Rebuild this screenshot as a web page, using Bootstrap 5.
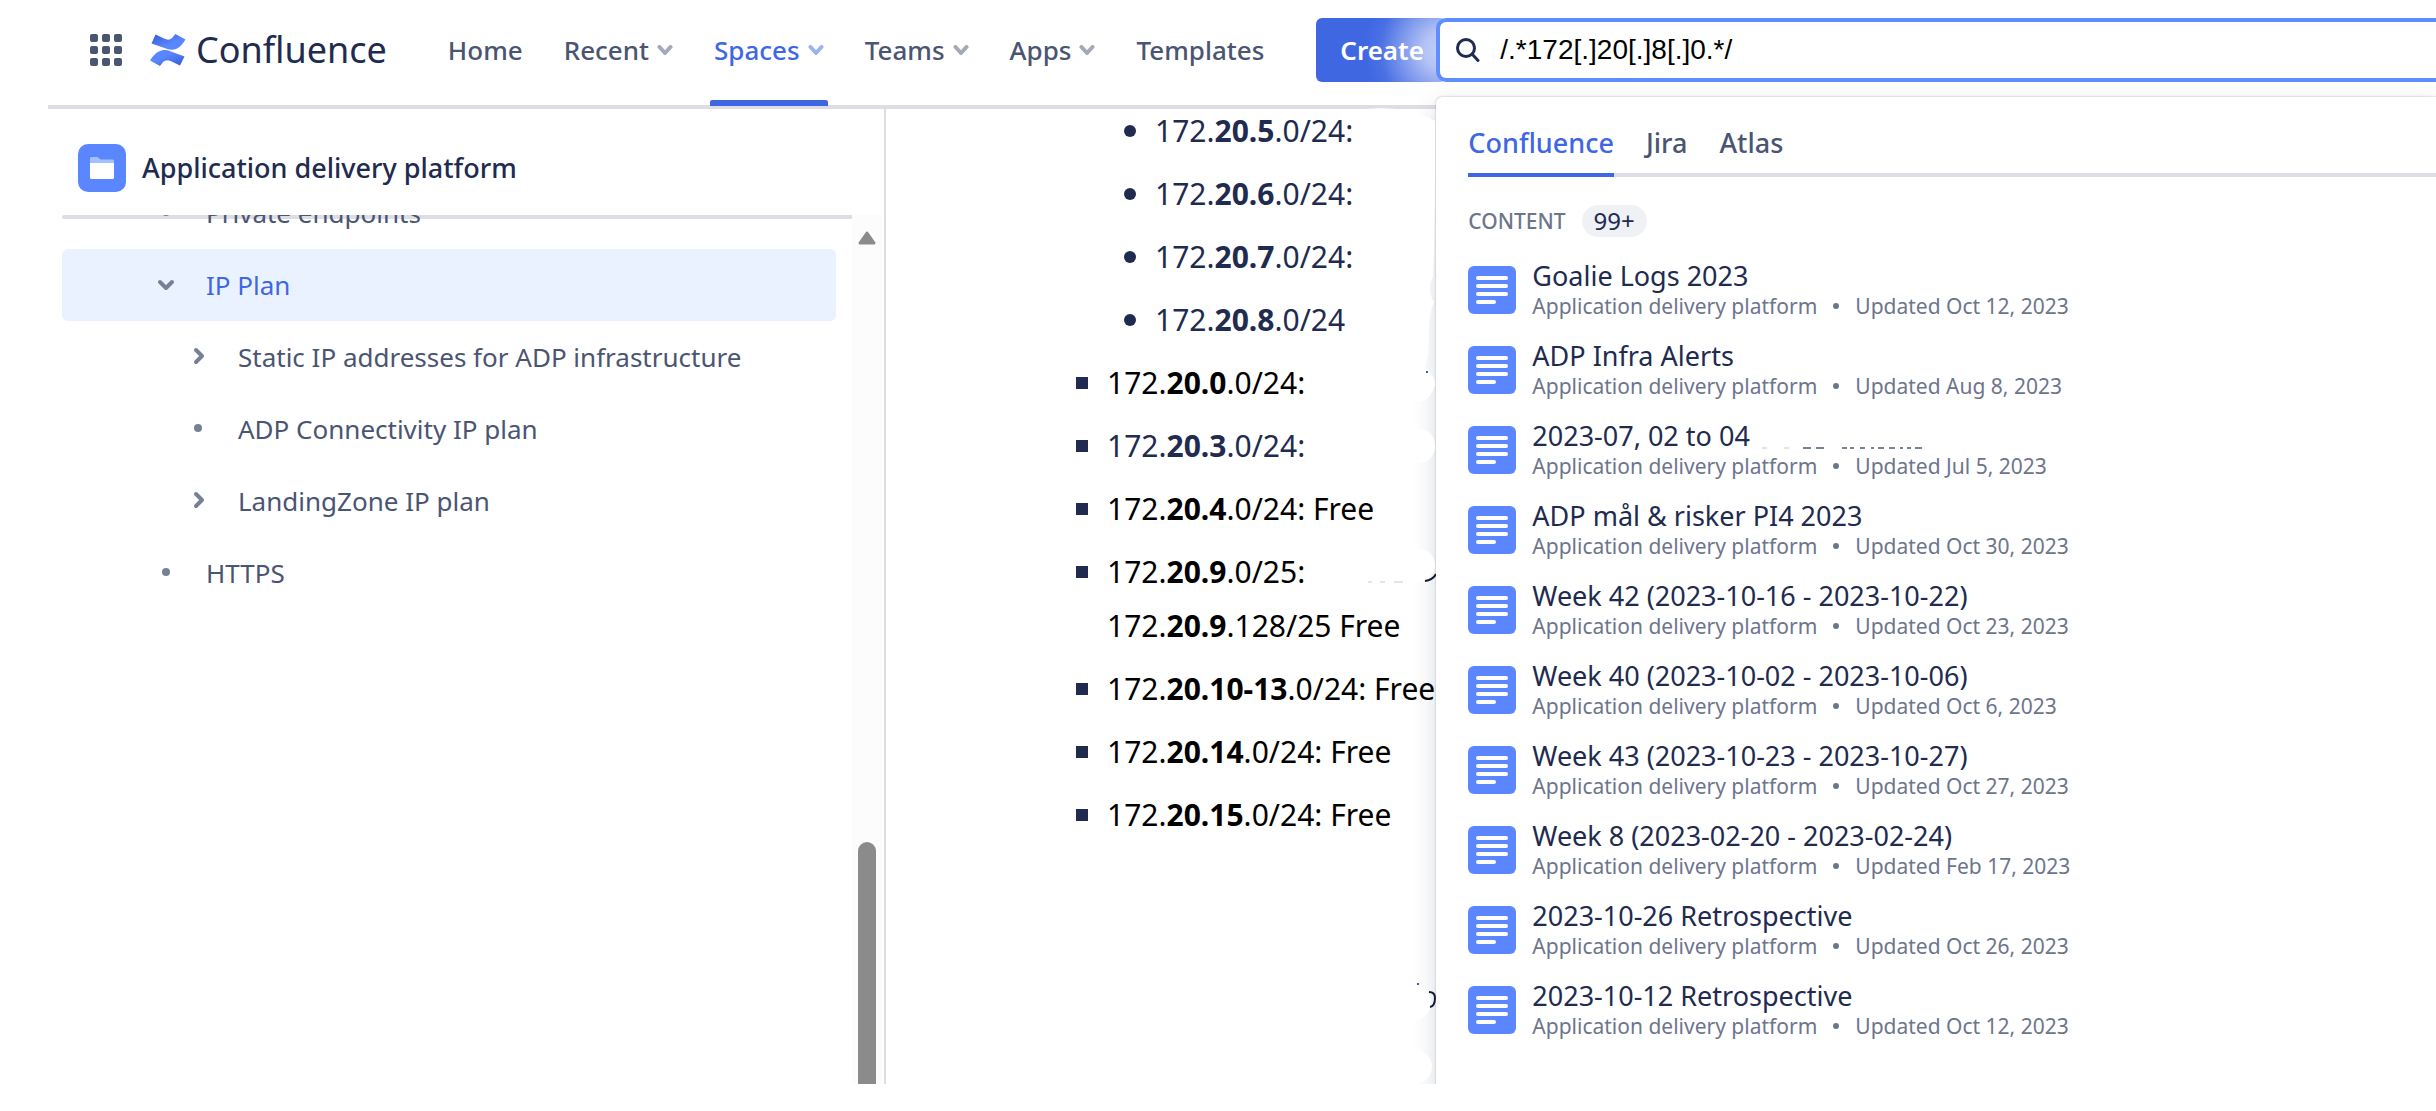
<!DOCTYPE html>
<html lang="en">
<head>
<meta charset="utf-8">
<meta name="viewport" content="width=device-width, initial-scale=1">
<title>Application delivery platform - Confluence</title>
<link href="https://cdn.jsdelivr.net/npm/bootstrap@5.3.0/dist/css/bootstrap.min.css" rel="stylesheet">
<style>
:root{--navy:#212b4f;--slate:#4a5572;--muted-ink:#6d758d;--brand:#3f67e4;--sky:#5a87ff;--rule:#dddee5}
body{font-family:"Noto Sans","Open Sans",sans-serif;font-size:26px;line-height:36px;color:var(--navy);background:#fff}
a{color:inherit;text-decoration:none}
.shell{height:calc(100vh - 27px);margin-left:48px}
.topbar{height:109px;border-bottom:4px solid var(--rule);padding-left:42px}
.topbar-start{height:100px}
.brandlink{gap:10px}
.brandname{font-size:36px;line-height:40px;color:var(--navy)}
.mainnav{gap:33px;margin-left:57px;font-weight:500;color:var(--slate)}
.mainnav a{position:relative;display:flex;align-items:center;gap:8px;height:100px;padding:0 4px;white-space:nowrap}
.mainnav svg{opacity:.5}
.mainnav a.current{color:var(--brand)}
.mainnav a.current::after{content:"";position:absolute;left:0;right:0;bottom:-6px;height:6px;background:var(--brand);border-radius:2px 2px 0 0}
.create{height:64px;width:130px;margin-left:48px;margin-right:-10px;padding:0 0 0 24px;border:0;border-radius:6px;color:#fff;font-size:26px;font-weight:600;text-align:left;background:radial-gradient(circle at 128px 32px,#c5d1f8 0,#b4c3f5 20px,#7f9aed 42px,#4a70e4 64px,#3f67e2 80px)}
.finder{position:relative;z-index:5;height:64px;margin-top:18px}
.finderbox{height:64px;border:4px solid #5f8dff;border-right:0;border-radius:10px 0 0 10px;background:#fff;padding-left:16px;gap:20px}
.finderbox input{border:0;outline:0;background:none;color:#000;font:28px/36px "Liberation Sans",Arial,sans-serif;padding:0}
.panel{position:absolute;top:79px;left:0;right:0;height:calc(100vh - 100px);background:#fff;border-radius:6px 0 0 0;padding-left:32px;box-shadow:0 0 2px rgba(9,30,66,.35),0 8px 24px rgba(9,30,66,.16)}
.patches{position:absolute;left:-80px;top:0}
.tabs{gap:32px;margin-top:20px;border-bottom:4px solid var(--rule);font-size:27px;font-weight:500;color:var(--slate)}
.tabs a{padding:8px 0 12px;margin-bottom:-4px;border-bottom:4px solid transparent}
.tabs a.current{color:var(--brand);border-color:var(--brand)}
.grouphead{margin-top:28px;height:32px;gap:16px;font-size:21px;font-weight:500;color:var(--muted-ink)}
.count{font-size:24px;line-height:32px;font-weight:400;padding:0 12px;border-radius:16px;background:#f0f1f4;color:var(--navy)}
.hits{margin:20px 0 0}
.hits a{display:flex;gap:16px;height:80px;padding-top:9px}
.hits svg.doc{flex:none}
.hits .name{font-size:27px;line-height:30px;margin-top:-5px;color:var(--navy)}
.hits .name svg{vertical-align:-3px}
.hits .meta{font-size:21px;line-height:30px;color:var(--muted-ink)}
.hits .meta i{display:inline-block;width:6px;height:6px;border-radius:50%;background:currentColor;margin:0 16px;vertical-align:5px}
.side{width:838px;border-right:2px solid var(--rule)}
.spacehead{height:106px;padding-left:30px;padding-top:12px;gap:16px;font-size:27px;font-weight:500}
.treebox{position:relative;margin-left:14px}
.treebox::before{content:"";position:absolute;top:0;left:0;right:30px;height:4px;border-radius:2px;background:var(--rule)}
.tree{position:relative;flex:1;margin-top:-38px;padding-right:16px;color:var(--slate)}
.tree a{display:flex;align-items:center;height:72px;gap:24px;padding-left:88px;border-radius:6px}
.tree .deep a{padding-left:120px}
.tree a.current{background:#ebf2ff;color:var(--brand)}
.tree svg{color:#768197}
.track{position:relative;width:30px;margin-right:2px;background:#fcfcfc;padding:16px 6px 0}
.thumb{height:242px;width:18px;border-radius:9px 9px 0 0;background:#8b8b8b}
.article{padding-left:190px;font-size:30px;line-height:54px;color:#000}
.article ul{list-style:none;margin:0;padding:0;white-space:nowrap}
.article li{position:relative;padding-left:31px;margin-bottom:9px}
.article li::before{content:"";position:absolute;left:0;top:21px;width:12px;height:12px;background:var(--navy)}
.article .inner{padding-left:48px;margin-top:-5px}
.article .inner li::before{border-radius:50%}
.article .inner,.article .ink{color:var(--navy)}
</style>
<script src="https://cdn.jsdelivr.net/npm/bootstrap@5.3.0/dist/js/bootstrap.bundle.min.js"></script>
</head>
<body>
<svg width="0" height="0" class="position-absolute" aria-hidden="true">
 <defs>
  <linearGradient id="ga" x1="0" y1="0" x2="1" y2="1"><stop offset="0" stop-color="#3459cf"/><stop offset=".6" stop-color="#5a87ff"/></linearGradient>
  <linearGradient id="gb" x1="1" y1="1" x2="0" y2="0"><stop offset="0" stop-color="#3459cf"/><stop offset=".6" stop-color="#5a87ff"/></linearGradient>
  <symbol id="down" viewBox="0 0 16 12"><path d="M2.500 3l5.500 6 5.500-6" fill="none" stroke="currentColor" stroke-width="4" stroke-linecap="round" stroke-linejoin="round"/></symbol>
  <symbol id="treedown" viewBox="0 0 32 32"><path d="M10 13l6 6 6-6" fill="none" stroke="currentColor" stroke-width="4" stroke-linecap="round" stroke-linejoin="round"/></symbol>
  <symbol id="treeright" viewBox="0 0 32 32"><path d="M14 9l6 6-6 6" fill="none" stroke="currentColor" stroke-width="4" stroke-linecap="round" stroke-linejoin="round"/></symbol>
  <symbol id="dot" viewBox="0 0 32 32"><circle cx="16" cy="15" r="4" fill="currentColor"/></symbol>
  <symbol id="page" viewBox="0 0 48 48"><rect width="48" height="48" rx="6" fill="#5a87ff"/><path d="M10 12h28M10 20h28M10 28h28M10 36h16" stroke="#fff" stroke-width="4" stroke-linecap="round"/></symbol>
 </defs>
</svg>
<div class="shell overflow-hidden d-flex flex-column">
 <header class="topbar d-flex flex-shrink-0">
  <div class="topbar-start d-flex align-items-center flex-shrink-0">
   <button type="button" class="btn p-0 border-0 d-flex" aria-label="Switch to another app">
    <svg width="32" height="32" viewBox="0 0 32 32" fill="#4a5572"><rect width="8" height="8" rx="2"/><rect x="12" width="8" height="8" rx="2"/><rect x="24" width="8" height="8" rx="2"/><rect y="12" width="8" height="8" rx="2"/><rect x="12" y="12" width="8" height="8" rx="2"/><rect x="24" y="12" width="8" height="8" rx="2"/><rect y="24" width="8" height="8" rx="2"/><rect x="12" y="24" width="8" height="8" rx="2"/><rect x="24" y="24" width="8" height="8" rx="2"/></svg>
   </button>
   <a href="#" class="brandlink d-flex align-items-center ms-4 ps-1">
    <svg width="36" height="32" viewBox="0 0 36 32"><path d="M5.500 .5L14 4.500Q19 7 22 4L25.500 0L35.500 5.500Q31 13 26 15Q21 17 14.500 14L1.500 9.500Z" fill="url(#ga)"/><path d="M30 31.500L20.500 27Q16.500 25 13 28L10 32L0 26.500Q4.500 19 10 17Q15 15 21 17.500L34.500 22.500Z" fill="url(#gb)"/></svg>
    <span class="brandname">Confluence</span>
   </a>
   <nav class="mainnav d-flex" aria-label="Primary">
    <a href="#">Home</a>
    <a href="#">Recent<svg width="16" height="12"><use href="#down"/></svg></a>
    <a href="#" class="current">Spaces<svg width="16" height="12"><use href="#down"/></svg></a>
    <a href="#">Teams<svg width="16" height="12"><use href="#down"/></svg></a>
    <a href="#">Apps<svg width="16" height="12"><use href="#down"/></svg></a>
    <a href="#">Templates</a>
   </nav>
   <button type="button" class="create">Create</button>
  </div>
  <div class="finder flex-grow-1">
   <div class="finderbox d-flex align-items-center">
    <label for="q" class="d-flex" aria-label="Search"><svg width="24" height="26" viewBox="0 0 24 26" fill="none" stroke="#212b4f" stroke-width="3" stroke-linecap="round"><circle cx="10" cy="11" r="8.500"/><path d="M16.500 17.500L22 23.500"/></svg></label>
    <input id="q" type="text" class="flex-grow-1" value="/.*172[.]20[.]8[.]0.*/">
   </div>
   <section class="panel" aria-label="Search results">
    <svg class="patches" width="80" height="987" viewBox="0 0 80 987" aria-hidden="true">
     <g fill="#fff"><path d="M10 12Q50 8 79 24V50Q79 130 77 180Q70 192 78 205Q72 218 73 240Q72 262 69 270Q80 280 79 288Q74 304 64 304H10Z"/><rect x="30" y="332" width="49" height="34" rx="16"/><rect x="30" y="452" width="49" height="32" rx="16"/><rect x="30" y="888" width="45" height="35" rx="17"/><rect x="30" y="953" width="46" height="34" rx="17"/></g>
     <path d="M69 484Q77 483 80 477M73 895Q79 895 79 901Q79 909 74 910" fill="none" stroke="#141a30" stroke-width="2"/>
     <path d="M12 485h4M24 485h5M38 485h9" stroke="#ccc" stroke-width="1"/>
     <path d="M70 275h2M61 887h2" stroke="#3d5c90" stroke-width="2"/>
    </svg>
    <nav class="tabs d-flex" aria-label="Products"><a href="#" class="current">Confluence</a><a href="#">Jira</a><a href="#">Atlas</a></nav>
    <div class="grouphead d-flex align-items-center"><span>CONTENT</span><span class="count">99+</span></div>
    <div class="hits">
     <a href="#"><svg class="doc" width="48" height="48"><use href="#page"/></svg><div><div class="name">Goalie Logs 2023</div><div class="meta">Application delivery platform<i></i>Updated Oct 12, 2023</div></div></a>
     <a href="#"><svg class="doc" width="48" height="48"><use href="#page"/></svg><div><div class="name">ADP Infra Alerts</div><div class="meta">Application delivery platform<i></i>Updated Aug 8, 2023</div></div></a>
     <a href="#"><svg class="doc" width="48" height="48"><use href="#page"/></svg><div><div class="name">2023-07, 02 to 04<svg width="180" height="4" viewBox="0 0 180 4" aria-hidden="true"><path d="M12 3h5M34 3h5" stroke="#c3c6d0" stroke-width="1"/><path d="M53 3h8M66 3h8M92 3h5M100 3h4M110 3h5M121 3h3M128 3h6M139 3h6M150 3h3M157 3h4M165 3h7" stroke="#7b8297" stroke-width="2"/></svg></div><div class="meta">Application delivery platform<i></i>Updated Jul 5, 2023</div></div></a>
     <a href="#"><svg class="doc" width="48" height="48"><use href="#page"/></svg><div><div class="name">ADP mål &amp; risker PI4 2023</div><div class="meta">Application delivery platform<i></i>Updated Oct 30, 2023</div></div></a>
     <a href="#"><svg class="doc" width="48" height="48"><use href="#page"/></svg><div><div class="name">Week 42 (2023-10-16 - 2023-10-22)</div><div class="meta">Application delivery platform<i></i>Updated Oct 23, 2023</div></div></a>
     <a href="#"><svg class="doc" width="48" height="48"><use href="#page"/></svg><div><div class="name">Week 40 (2023-10-02 - 2023-10-06)</div><div class="meta">Application delivery platform<i></i>Updated Oct 6, 2023</div></div></a>
     <a href="#"><svg class="doc" width="48" height="48"><use href="#page"/></svg><div><div class="name">Week 43 (2023-10-23 - 2023-10-27)</div><div class="meta">Application delivery platform<i></i>Updated Oct 27, 2023</div></div></a>
     <a href="#"><svg class="doc" width="48" height="48"><use href="#page"/></svg><div><div class="name">Week 8 (2023-02-20 - 2023-02-24)</div><div class="meta">Application delivery platform<i></i>Updated Feb 17, 2023</div></div></a>
     <a href="#"><svg class="doc" width="48" height="48"><use href="#page"/></svg><div><div class="name">2023-10-26 Retrospective</div><div class="meta">Application delivery platform<i></i>Updated Oct 26, 2023</div></div></a>
     <a href="#"><svg class="doc" width="48" height="48"><use href="#page"/></svg><div><div class="name">2023-10-12 Retrospective</div><div class="meta">Application delivery platform<i></i>Updated Oct 12, 2023</div></div></a>
    </div>
   </section>
  </div>
 </header>
 <div class="d-flex flex-grow-1 overflow-hidden">
  <aside class="side d-flex flex-column flex-shrink-0">
   <a href="#" class="spacehead d-flex align-items-center flex-shrink-0">
    <svg width="48" height="48" viewBox="0 0 48 48"><rect width="48" height="48" rx="10" fill="#5a87ff"/><path d="M12 21v-6.500q0-1.500 1.500-1.500h6l3 2.500h12q1.500 0 1.500 1.500v4z" fill="#a5c0ff"/><path d="M12 19h24v14.500q0 1.500-1.500 1.500h-21q-1.500 0-1.500-1.500z" fill="#fff"/></svg>
    <span>Application delivery platform</span>
   </a>
   <div class="treebox d-flex flex-grow-1 overflow-hidden">
    <nav class="tree" aria-label="Page tree">
     <a href="#"><svg width="32" height="32"><use href="#dot"/></svg>Private endpoints</a>
     <a href="#" class="current"><svg width="32" height="32"><use href="#treedown"/></svg>IP Plan</a>
     <div class="deep">
      <a href="#"><svg width="32" height="32"><use href="#treeright"/></svg>Static IP addresses for ADP infrastructure</a>
      <a href="#"><svg width="32" height="32"><use href="#dot"/></svg>ADP Connectivity IP plan</a>
      <a href="#"><svg width="32" height="32"><use href="#treeright"/></svg>LandingZone IP plan</a>
     </div>
     <a href="#"><svg width="32" height="32"><use href="#dot"/></svg>HTTPS</a>
    </nav>
    <div class="track d-flex flex-column justify-content-between" aria-hidden="true">
     <svg width="18" height="14" viewBox="0 0 18 14"><path d="M9 2L16 12H2Z" fill="#8b8b8b" stroke="#8b8b8b" stroke-width="3" stroke-linejoin="round"/></svg>
     <div class="thumb"></div>
    </div>
   </div>
  </aside>
  <main class="article flex-grow-1">
   <ul class="inner">
    <li>172.<b>20.5</b>.0/24:</li>
    <li>172.<b>20.6</b>.0/24:</li>
    <li>172.<b>20.7</b>.0/24:</li>
    <li>172.<b>20.8</b>.0/24</li>
   </ul>
   <ul>
    <li>172.<b>20.0</b>.0/24:</li>
    <li class="ink">172.<b>20.3</b>.0/24:</li>
    <li>172.<b>20.4</b>.0/24: Free</li>
    <li>172.<b>20.9</b>.0/25:<br>172.<b>20.9</b>.128/25 Free</li>
    <li>172.<b>20.10-13</b>.0/24: Free</li>
    <li>172.<b>20.14</b>.0/24: Free</li>
    <li>172.<b>20.15</b>.0/24: Free</li>
   </ul>
  </main>
 </div>
</div>
</body>
</html>
